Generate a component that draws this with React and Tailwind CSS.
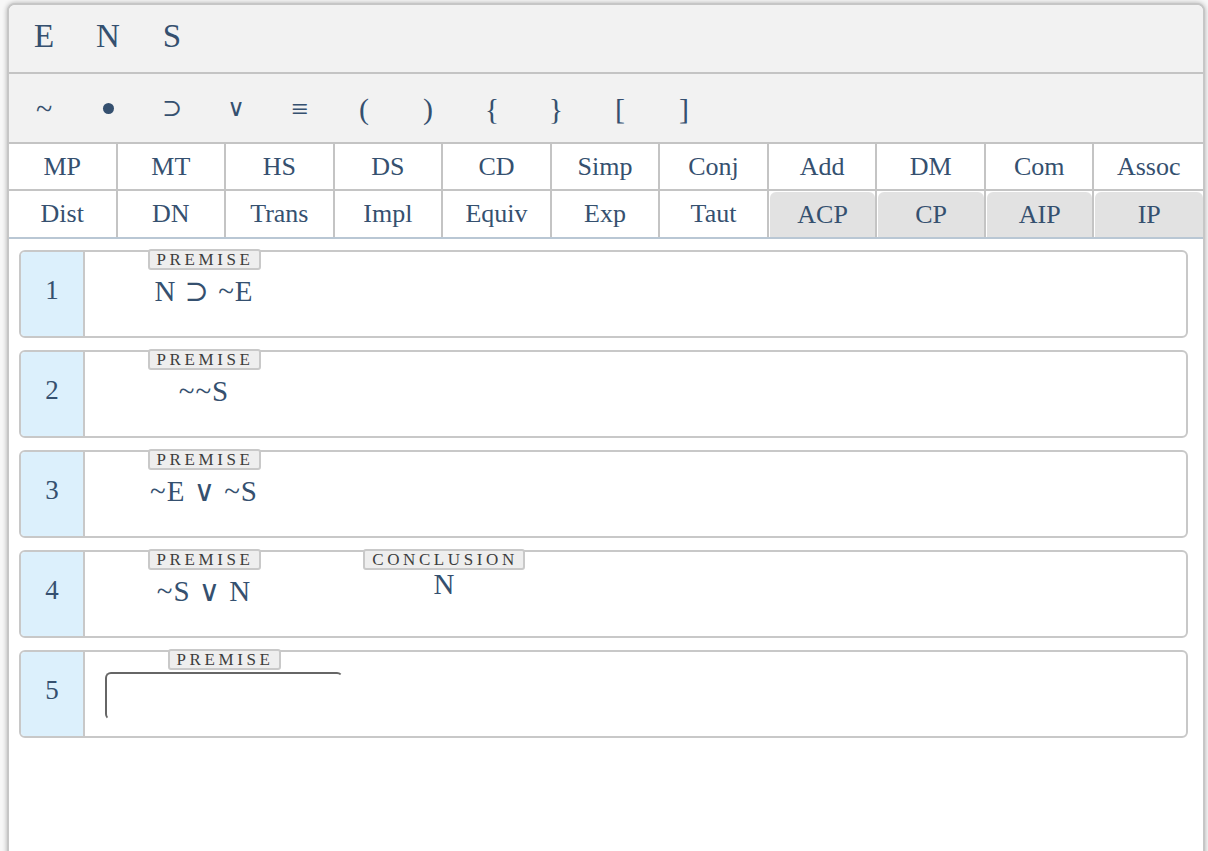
const serif = { fontFamily: '"Liberation Serif", "DejaVu Serif", serif' }

const letters = ['E', 'N', 'S']
const symbols = ['~', '•', '⊃', '∨', '≡', '(', ')', '{', '}', '[', ']']
const rules = [
  ['MP', 'MT', 'HS', 'DS', 'CD', 'Simp', 'Conj', 'Add', 'DM', 'Com', 'Assoc'],
  ['Dist', 'DN', 'Trans', 'Impl', 'Equiv', 'Exp', 'Taut', 'ACP', 'CP', 'AIP', 'IP'],
]
const shaded = ['ACP', 'CP', 'AIP', 'IP']

const lines = [
  { n: 1, premise: 'N ⊃ ~E' },
  { n: 2, premise: '~~S' },
  { n: 3, premise: '~E ∨ ~S' },
  { n: 4, premise: '~S ∨ N', conclusion: 'N' },
  { n: 5, input: true },
]

function Tag({ children }) {
  return (
    <div className="h-[21px] pl-[7px] pr-[5px] flex items-center bg-[#eeeeee] border-2 border-[#c9c9c9] rounded-[3px] text-[17px] leading-none tracking-[3.6px] text-[#3d3d3d] uppercase">
      {children}
    </div>
  )
}

function Symbol({ s }) {
  if (s === '•') {
    return (
      <div className="w-[64px] flex justify-center">
        <span className="w-[11px] h-[11px] rounded-full bg-[#35506f]" />
      </div>
    )
  }
  let size = 'text-[30px]'
  if (s === '∨' || s === '⊃') size = 'text-[24px] font-light'
  if (s === '≡') size = 'text-[30px] font-light'
  return <div className={`w-[64px] text-center ${size}`}>{s}</div>
}

function ProofLine({ line }) {
  return (
    <div className="flex h-[88px] border-2 border-[#c8c8c8] rounded-[6px] bg-white">
      <div className="w-[64px] shrink-0 bg-[#dcf0fc] border-r-2 border-[#c8c8c8] rounded-l-[4px] flex items-center justify-center pb-[8px] text-[27px]">
        {line.n}
      </div>
      <div className="flex items-start pl-[20px]">
        {line.input ? (
          <div className="w-[238px] flex flex-col items-center -mt-[3px]">
            <Tag>premise</Tag>
            <div className="mt-[2px] w-[238px] h-[48px] border-2 border-t-[#666] border-l-[#666] border-r-transparent border-b-transparent rounded-[6px]" />
          </div>
        ) : (
          <>
            <div className="w-[198px] flex flex-col items-center -mt-[3px]">
              <Tag>premise</Tag>
              <div className="mt-[5px] text-[29px] leading-[32px] tracking-[1px] whitespace-pre">{line.premise}</div>
            </div>
            {line.conclusion && (
              <div className="w-[282px] flex flex-col items-center -mt-[3px]">
                <Tag>conclusion</Tag>
                <div className="-mt-[2px] text-[29px] leading-[32px]">{line.conclusion}</div>
              </div>
            )}
          </>
        )}
      </div>
    </div>
  )
}

export default function App() {
  return (
    <div className="w-[1208px] h-[851px] overflow-hidden bg-[#f7f7f7] pt-[3px] pl-[7px] pr-[3px]" style={serif}>
      <div className="h-[900px] bg-white border-2 border-[#c6c6c6] rounded-[8px] shadow-[0_0_5px_rgba(0,0,0,0.3)] text-[#35506f] overflow-hidden">
        <div className="h-[69px] bg-[#f2f2f2] flex items-center pl-[3px] border-b-2 border-[#c4c4c4] pb-[4px]">
          {letters.map(l => (
            <div key={l} className="w-[64px] text-center text-[33px]">{l}</div>
          ))}
        </div>
        <div className="h-[70px] bg-[#f2f2f2] flex items-center pl-[3px] border-b-2 border-[#c4c4c4]">
          {symbols.map(s => (
            <Symbol key={s} s={s} />
          ))}
        </div>
        <div className="grid grid-cols-11 border-b-2 border-[#b9c7d4]">
          {rules.map((row, ri) =>
            row.map((r, ci) => (
              <div
                key={r}
                className={`${ri === 0 ? 'h-[47px] border-b-2' : 'h-[46px]'} ${ci < 10 ? 'border-r-2' : ''} border-[#c4c4c4] flex`}
              >
                <div
                  className={`flex-1 flex items-center justify-center text-[26px] pb-[1px] ${shaded.includes(r) ? 'bg-[#e2e2e2] rounded-t-[6px] mt-[1px] ml-[1px]' : ''}`}
                >
                  {r}
                </div>
              </div>
            ))
          )}
        </div>
        <div className="pt-[11px] pl-[10px] pr-[15px] flex flex-col gap-[12px]">
          {lines.map(l => (
            <ProofLine key={l.n} line={l} />
          ))}
        </div>
      </div>
    </div>
  )
}
